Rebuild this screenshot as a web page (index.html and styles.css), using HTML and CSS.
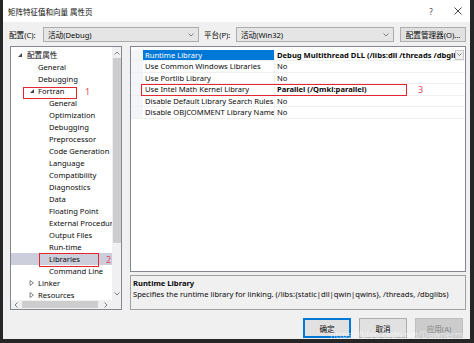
FILE: index.html
```html
<!DOCTYPE html>
<html lang="zh-CN">
<head>
  <meta charset="UTF-8" />
  <title>矩阵特征值和向量 属性页</title>
  <link rel="stylesheet" href="styles.css">
</head>
<body>
  <div class="dialog">
    <div class="titlebar">
      <span class="title">矩阵特征值和向量 属性页</span>
      <span class="help">?</span>
      <span class="close">
        <svg width="8" height="8" viewBox="0 0 8 8"><path d="M0.5 0.5L7.5 7.5M7.5 0.5L0.5 7.5"/></svg>
      </span>
    </div>

    <div class="config-row">
      <span class="label label-config">配置(C):</span>
      <div class="combo combo-config">
        <span class="combo-text">活动(Debug)</span>
        <svg class="chevron" width="6" height="4" viewBox="0 0 6 4"><path d="M0.5 0.5L3 3L5.5 0.5"/></svg>
      </div>
      <span class="label label-platform">平台(P):</span>
      <div class="combo combo-platform">
        <span class="combo-text">活动(Win32)</span>
        <svg class="chevron" width="6" height="4" viewBox="0 0 6 4"><path d="M0.5 0.5L3 3L5.5 0.5"/></svg>
      </div>
      <div class="btn btn-manager">配置管理器(O)...</div>
    </div>

    <div class="main">
      <div class="tree-panel">
        <div class="tree-body">
          <div class="tree">
            <div class="node lvl0">
              <span class="arrow"><svg width="4" height="4" viewBox="0 0 4 4"><polygon class="open" points="4,0 4,4 0,4"/></svg></span>
              <span>配置属性</span>
            </div>
            <div class="node lvl1"><span class="arrow"></span><span>General</span></div>
            <div class="node lvl1"><span class="arrow"></span><span>Debugging</span></div>
            <div class="node lvl1">
              <span class="arrow"><svg width="5" height="4" viewBox="0 0 5 4"><polygon class="open" points="5,0 5,4 1,4"/></svg></span>
              <span>Fortran</span>
              <span class="mark mark-fortran"></span>
              <span class="num num-1">1</span>
            </div>
            <div class="node lvl2"><span class="arrow"></span><span>General</span></div>
            <div class="node lvl2"><span class="arrow"></span><span>Optimization</span></div>
            <div class="node lvl2"><span class="arrow"></span><span>Debugging</span></div>
            <div class="node lvl2"><span class="arrow"></span><span>Preprocessor</span></div>
            <div class="node lvl2"><span class="arrow"></span><span>Code Generation</span></div>
            <div class="node lvl2"><span class="arrow"></span><span>Language</span></div>
            <div class="node lvl2"><span class="arrow"></span><span>Compatibility</span></div>
            <div class="node lvl2"><span class="arrow"></span><span>Diagnostics</span></div>
            <div class="node lvl2"><span class="arrow"></span><span>Data</span></div>
            <div class="node lvl2"><span class="arrow"></span><span>Floating Point</span></div>
            <div class="node lvl2"><span class="arrow"></span><span>External Procedures</span></div>
            <div class="node lvl2"><span class="arrow"></span><span>Output Files</span></div>
            <div class="node lvl2"><span class="arrow"></span><span>Run-time</span></div>
            <div class="node lvl2 selected">
              <span class="arrow"></span><span>Libraries</span>
              <span class="mark mark-libraries"></span>
              <span class="num num-2">2</span>
            </div>
            <div class="node lvl2"><span class="arrow"></span><span>Command Line</span></div>
            <div class="node lvl1">
              <span class="arrow"><svg width="5" height="6" viewBox="0 0 5 6"><polygon class="closed" points="1,0.5 4.5,3 1,5.5"/></svg></span>
              <span>Linker</span>
            </div>
            <div class="node lvl1">
              <span class="arrow"><svg width="5" height="6" viewBox="0 0 5 6"><polygon class="closed" points="1,0.5 4.5,3 1,5.5"/></svg></span>
              <span>Resources</span>
            </div>
          </div>
          <div class="vscroll">
            <svg class="sb-arrow" width="6" height="4" viewBox="0 0 6 4"><path d="M0.5 3.5L3 1L5.5 3.5"/></svg>
            <div class="vthumb"></div>
            <div class="sb-space"></div>
            <svg class="sb-arrow" width="6" height="4" viewBox="0 0 6 4"><path d="M0.5 0.5L3 3L5.5 0.5"/></svg>
          </div>
        </div>
        <div class="hscroll">
          <span class="h-arrow"><svg width="4" height="6" viewBox="0 0 4 6"><path d="M3.5 0.5L1 3L3.5 5.5"/></svg></span>
          <div class="hthumb"></div>
          <div class="sb-space"></div>
          <span class="h-arrow"><svg width="4" height="6" viewBox="0 0 4 6"><path d="M0.5 0.5L3 3L0.5 5.5"/></svg></span>
          <span class="corner"></span>
        </div>
      </div>

      <div class="right">
        <div class="grid">
          <div class="prop">
            <span class="pname active">Runtime Library</span>
            <span class="pvalue bold">
              <span class="pvalue-text">Debug Multithread DLL (/libs:dll /threads /dbglibs)</span>
              <span class="drop"><svg width="5" height="3" viewBox="0 0 5 3"><path d="M0.5 0.5L2.5 2.5L4.5 0.5"/></svg></span>
            </span>
          </div>
          <div class="prop">
            <span class="pname">Use Common Windows Libraries</span>
            <span class="pvalue">No</span>
          </div>
          <div class="prop">
            <span class="pname">Use Portlib Library</span>
            <span class="pvalue">No</span>
          </div>
          <div class="prop">
            <span class="pname">Use Intel Math Kernel Library</span>
            <span class="pvalue bold">Parallel (/Qmkl:parallel)</span>
            <span class="mark mark-mkl"></span>
            <span class="num num-3">3</span>
          </div>
          <div class="prop">
            <span class="pname">Disable Default Library Search Rules</span>
            <span class="pvalue">No</span>
          </div>
          <div class="prop">
            <span class="pname">Disable OBJCOMMENT Library Names</span>
            <span class="pvalue">No</span>
          </div>
        </div>
        <div class="desc">
          <div class="desc-title">Runtime Library</div>
          <div>Specifies the runtime library for linking. (/libs:{static|dll|qwin|qwins}, /threads, /dbglibs)</div>
        </div>
      </div>
    </div>

    <div class="footer">
      <div class="btn btn-ok">确定</div>
      <div class="btn">取消</div>
      <div class="btn btn-disabled">应用(A)</div>
    </div>

    <span class="watermark">https://blog.csdn.net/Dawnerm</span>
  </div>
</body>
</html>
```

FILE: styles.css
```css
* {
  box-sizing: border-box;
}

body {
  margin: 0;
  width: 474px;
  height: 343px;
  background: #262626;
  font-family: "Noto Sans", "Noto Sans CJK SC", sans-serif;
  font-size: 7.6px;
  color: #0a0a0a;
  overflow: hidden;
}

.dialog {
  position: relative;
  margin-left: 3px;
  width: 467px;
  height: 339px;
  background: #f0f0f0;
  display: flex;
  flex-direction: column;
  overflow: hidden;
}

/* title bar */
.titlebar {
  height: 22px;
  background: #ffffff;
  display: flex;
  align-items: center;
  padding-left: 5px;
  flex-shrink: 0;
}

.title {
  flex: 1;
  font-size: 7.5px;
}

.help {
  width: 10px;
  text-align: center;
  margin-right: 10px;
  font-size: 8px;
  color: #444;
}

.close {
  width: 24px;
  display: flex;
  justify-content: center;
}

.close svg path {
  stroke: #333;
  stroke-width: 0.9;
}

/* configuration row */
.config-row {
  display: flex;
  align-items: center;
  height: 24px;
  padding: 1px 0 0 6px;
  flex-shrink: 0;
}

.label-config {
  width: 34px;
}

.label-platform {
  width: 32px;
  margin-left: 5px;
}

.combo {
  height: 15px;
  background: #e5e5e5;
  border: 1px solid #adadad;
  display: flex;
  align-items: center;
  padding-left: 4px;
}

.combo-config {
  width: 156px;
}

.combo-platform {
  width: 158px;
}

.combo-text {
  flex: 1;
}

.chevron {
  margin-right: 4px;
}

.chevron path,
.drop path,
.sb-arrow path,
.h-arrow path {
  fill: none;
  stroke: #707070;
  stroke-width: 0.9;
}

.btn {
  height: 20px;
  width: 48px;
  background: #e1e1e1;
  border: 1px solid #adadad;
  display: flex;
  align-items: center;
  justify-content: center;
}

.btn-manager {
  height: 15px;
  width: 66px;
  margin-left: 6px;
}

/* main area */
.main {
  display: flex;
  height: 264px;
  padding-left: 7px;
  gap: 8px;
  flex-shrink: 0;
}

.tree-panel {
  width: 112px;
  border: 1px solid #828790;
  background: #ffffff;
  display: flex;
  flex-direction: column;
}

.tree-body {
  display: flex;
  height: 253px;
}

.tree {
  width: 101px;
  padding-top: 2px;
  overflow: hidden;
}

.node {
  position: relative;
  display: flex;
  align-items: center;
  height: 12px;
  line-height: 12px;
  white-space: nowrap;
}

.node.lvl0 { padding-left: 7px; }
.node.lvl1 { padding-left: 18px; }
.node.lvl2 { padding-left: 29px; }

.node.selected {
  background: #cccedb;
}

.arrow {
  width: 9px;
  height: 12px;
  display: flex;
  align-items: center;
  flex-shrink: 0;
}

.arrow .open {
  fill: #444;
}

.arrow .closed {
  fill: none;
  stroke: #666;
  stroke-width: 0.8;
}

.vscroll {
  width: 9px;
  background: #f0f0f0;
  display: flex;
  flex-direction: column;
  align-items: center;
  padding: 4px 0 4px;
}

.sb-arrow {
  flex-shrink: 0;
}

.vthumb {
  width: 8px;
  height: 185px;
  margin-top: 3px;
  background: #cdcdcd;
}

.sb-space {
  flex: 1;
}

.hscroll {
  height: 9px;
  background: #f0f0f0;
  display: flex;
  align-items: center;
}

.h-arrow {
  width: 10px;
  display: flex;
  justify-content: center;
}

.hthumb {
  width: 76px;
  height: 7px;
  margin-left: 1px;
  background: #cdcdcd;
}

.corner {
  width: 10px;
}

/* annotations */
.mark {
  position: absolute;
  border: 1.5px solid #e3262f;
}

.num {
  position: absolute;
  top: 0;
  color: #e8475a;
  font-size: 9px;
  line-height: 12px;
}

.mark-fortran {
  left: 12px;
  top: 1.5px;
  width: 54px;
  height: 12px;
}

.num-1 {
  left: 74px;
  top: 1px;
}

.mark-libraries {
  left: 28px;
  top: 0;
  width: 60px;
  height: 14px;
}

.num-2 {
  left: 95px;
  top: 1px;
}

/* property grid */
.right {
  width: 336px;
  display: flex;
  flex-direction: column;
  gap: 3px;
}

.grid {
  height: 226px;
  border: 1px solid #828790;
  background: #ffffff;
  padding-top: 2.5px;
}

.prop {
  position: relative;
  display: grid;
  grid-template-columns: 131px 1fr;
  height: 11.6px;
  padding-left: 12px;
  background: linear-gradient(to right, #f3f5f9 12px, #ffffff 12px);
  border-bottom: 1px solid #f0f0f0;
  line-height: 10.6px;
}

.pname {
  padding-left: 2px;
  white-space: nowrap;
  overflow: hidden;
}

.pname.active {
  background: #0078d7;
  color: #ffffff;
}

.pvalue {
  display: flex;
  padding-left: 2px;
  border-left: 1px solid #f0f0f0;
  white-space: nowrap;
  overflow: hidden;
}

.bold {
  font-weight: 700;
}

.pvalue-text {
  flex: 1;
  overflow: hidden;
}

.drop {
  width: 9px;
  height: 10px;
  margin-right: 1px;
  background: #f0f0f0;
  border: 1px solid #c8c8c8;
  display: flex;
  align-items: center;
  justify-content: center;
  flex-shrink: 0;
}

.mark-mkl {
  left: 10px;
  top: 0;
  width: 266px;
  height: 12px;
}

.num-3 {
  left: 287px;
  top: 0;
}

.desc {
  height: 35px;
  border: 1px solid #a0a0a0;
  background: #f0f0f0;
  padding: 2px 2px;
  line-height: 10.5px;
  white-space: nowrap;
  overflow: hidden;
}

.desc-title {
  font-weight: 700;
}

/* footer buttons */
.footer {
  display: flex;
  justify-content: flex-end;
  gap: 8px;
  padding: 8px 7px 0 0;
}

.btn-ok {
  border: 1px solid #0078d7;
  box-shadow: inset 0 0 0 1px #0078d7;
}

.btn-disabled {
  background: #cccccc;
  border-color: #bfbfbf;
  color: #838383;
}

.watermark {
  position: absolute;
  left: 327px;
  top: 328px;
  font-size: 9px;
  color: rgba(255, 255, 255, 0.55);
  white-space: nowrap;
}
```
